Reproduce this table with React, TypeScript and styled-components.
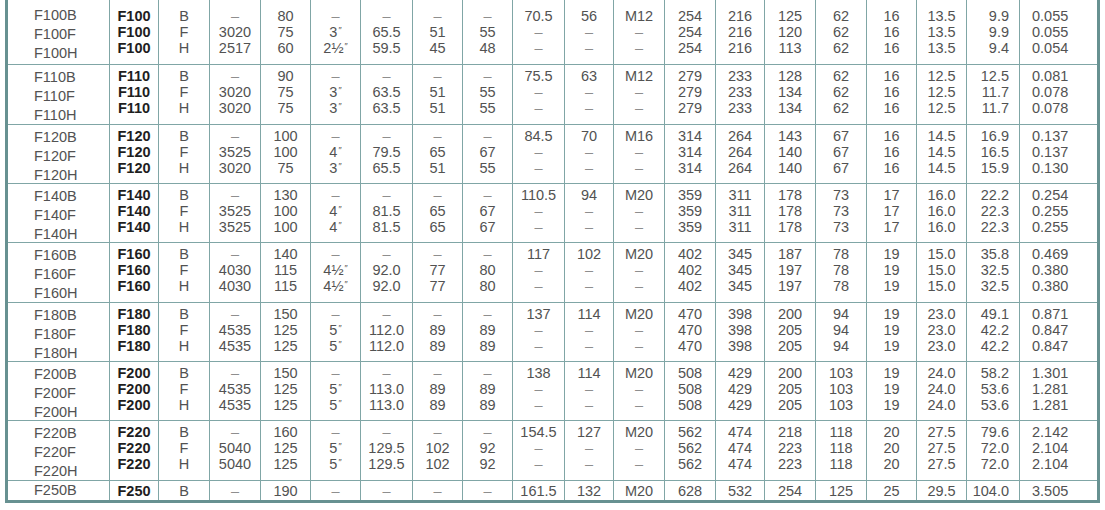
import React from "react";
import styled, { createGlobalStyle } from "styled-components";

const Global = createGlobalStyle`
  html, body { margin: 0; padding: 0; background: #ffffff; }
  body { font-family: "Liberation Sans", Arial, sans-serif; }
`;

const widths = [101, 48, 50, 50, 49, 49, 51, 49, 49, 51, 48, 50, 50, 48, 50, 50, 49, 49, 52, 77];
const rowHeights = [64, 59, 58, 58, 59, 58, 58, 59, 19];

const raw: string[][] = [
  [
    'F100B F100 B – 80 – – – – 70.5 56 M12 254 216 125 62 16 13.5 9.9 0.055',
    'F100F F100 F 3020 75 3" 65.5 51 55 – – – 254 216 120 62 16 13.5 9.9 0.055',
    'F100H F100 H 2517 60 2½" 59.5 45 48 – – – 254 216 113 62 16 13.5 9.4 0.054',
  ],
  [
    'F110B F110 B – 90 – – – – 75.5 63 M12 279 233 128 62 16 12.5 12.5 0.081',
    'F110F F110 F 3020 75 3" 63.5 51 55 – – – 279 233 134 62 16 12.5 11.7 0.078',
    'F110H F110 H 3020 75 3" 63.5 51 55 – – – 279 233 134 62 16 12.5 11.7 0.078',
  ],
  [
    'F120B F120 B – 100 – – – – 84.5 70 M16 314 264 143 67 16 14.5 16.9 0.137',
    'F120F F120 F 3525 100 4" 79.5 65 67 – – – 314 264 140 67 16 14.5 16.5 0.137',
    'F120H F120 H 3020 75 3" 65.5 51 55 – – – 314 264 140 67 16 14.5 15.9 0.130',
  ],
  [
    'F140B F140 B – 130 – – – – 110.5 94 M20 359 311 178 73 17 16.0 22.2 0.254',
    'F140F F140 F 3525 100 4" 81.5 65 67 – – – 359 311 178 73 17 16.0 22.3 0.255',
    'F140H F140 H 3525 100 4" 81.5 65 67 – – – 359 311 178 73 17 16.0 22.3 0.255',
  ],
  [
    'F160B F160 B – 140 – – – – 117 102 M20 402 345 187 78 19 15.0 35.8 0.469',
    'F160F F160 F 4030 115 4½" 92.0 77 80 – – – 402 345 197 78 19 15.0 32.5 0.380',
    'F160H F160 H 4030 115 4½" 92.0 77 80 – – – 402 345 197 78 19 15.0 32.5 0.380',
  ],
  [
    'F180B F180 B – 150 – – – – 137 114 M20 470 398 200 94 19 23.0 49.1 0.871',
    'F180F F180 F 4535 125 5" 112.0 89 89 – – – 470 398 205 94 19 23.0 42.2 0.847',
    'F180H F180 H 4535 125 5" 112.0 89 89 – – – 470 398 205 94 19 23.0 42.2 0.847',
  ],
  [
    'F200B F200 B – 150 – – – – 138 114 M20 508 429 200 103 19 24.0 58.2 1.301',
    'F200F F200 F 4535 125 5" 113.0 89 89 – – – 508 429 205 103 19 24.0 53.6 1.281',
    'F200H F200 H 4535 125 5" 113.0 89 89 – – – 508 429 205 103 19 24.0 53.6 1.281',
  ],
  [
    'F220B F220 B – 160 – – – – 154.5 127 M20 562 474 218 118 20 27.5 79.6 2.142',
    'F220F F220 F 5040 125 5" 129.5 102 92 – – – 562 474 223 118 20 27.5 72.0 2.104',
    'F220H F220 H 5040 125 5" 129.5 102 92 – – – 562 474 223 118 20 27.5 72.0 2.104',
  ],
  ['F250B F250 B – 190 – – – – 161.5 132 M20 628 532 254 125 25 29.5 104.0 3.505'],
];

const groups = raw.map((g) => g.map((l) => l.split(" ")));

const Page = styled.div`
  width: 1105px;
  height: 510px;
  overflow: hidden;
  background: #ffffff;
`;

const Table = styled.div`
  margin-left: 5px;
  width: 1089px;
  display: grid;
  grid-template-columns: ${widths.map((w) => `${w}px`).join(" ")};
  grid-template-rows: ${rowHeights.map((h) => `${h}px`).join(" ")};
  column-gap: 1px;
  row-gap: 1px;
  background: #80a6a6;
  border: 3px solid #679191;
  border-top: none;
`;

type Align = "left" | "center" | "right";

const Cell = styled.div<{
  $align: Align;
  $padL: number;
  $padR: number;
  $padTop: number;
  $lh: number;
  $bold: boolean;
  $single: boolean;
}>`
  background: #ffffff;
  display: flex;
  flex-direction: column;
  justify-content: ${(p) => (p.$single ? "center" : "flex-start")};
  align-items: ${(p) =>
    p.$align === "left" ? "flex-start" : p.$align === "right" ? "flex-end" : "center"};
  padding: ${(p) => (p.$single ? 0 : p.$padTop)}px ${(p) => p.$padR}px 0 ${(p) => p.$padL}px;
  font-size: 14.5px;
  line-height: ${(p) => p.$lh}px;
  font-weight: ${(p) => (p.$bold ? 700 : 400)};
  color: ${(p) => (p.$bold ? "#1e1e1e" : "#525252")};
  white-space: nowrap;
  overflow: hidden;
`;

const Line = styled.span`
  display: block;
`;

const Dash = styled.span`
  color: #8e8e8e;
`;

const Inch = styled.span`
  position: relative;
  top: -4px;
  font-size: 9px;
  line-height: 0;
  margin-left: 1px;
`;

function colConfig(i: number) {
  if (i === 0) return { align: "left" as Align, padL: 26, padR: 0, lh: 19 };
  if (i === 18) return { align: "right" as Align, padL: 0, padR: 10, lh: 16 };
  if (i === 19) return { align: "left" as Align, padL: 12, padR: 0, lh: 16 };
  return { align: "center" as Align, padL: 0, padR: 0, lh: 16 };
}

function renderValue(v: string) {
  if (v === "–") return <Dash>–</Dash>;
  if (v.endsWith('"')) {
    return (
      <>
        {v.slice(0, -1)}
        <Inch>″</Inch>
      </>
    );
  }
  return v;
}

export default function App() {
  return (
    <Page>
      <Global />
      <Table>
        {groups.map((lines, gi) =>
          widths.map((_, ci) => {
            const cfg = colConfig(ci);
            const single = lines.length === 1;
            const padTop = gi === 0 ? (ci === 0 ? 6 : 8) : 3;
            return (
              <Cell
                key={`${gi}-${ci}`}
                $align={cfg.align}
                $padL={cfg.padL}
                $padR={cfg.padR}
                $padTop={padTop}
                $lh={cfg.lh}
                $bold={ci === 1}
                $single={single}
              >
                {lines.map((l, li) => (
                  <Line key={li}>{renderValue(l[ci])}</Line>
                ))}
              </Cell>
            );
          })
        )}
      </Table>
    </Page>
  );
}
